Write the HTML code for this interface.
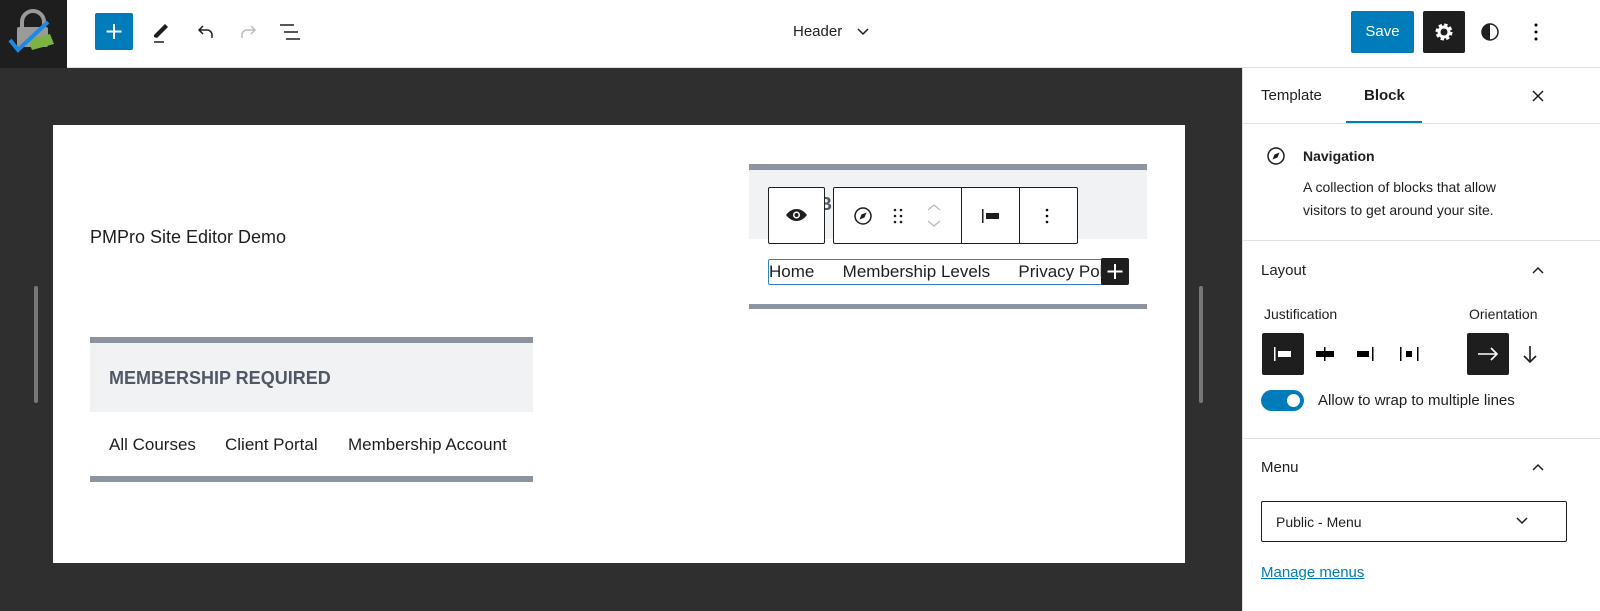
<!DOCTYPE html>
<html><head><meta charset="utf-8">
<style>
*{box-sizing:border-box;margin:0;padding:0}
body{width:1600px;height:611px;overflow:hidden;font-family:"Liberation Sans",sans-serif;color:#1e1e1e;background:#fff;position:relative}
.abs{position:absolute}
.top{left:0;top:0;width:1600px;height:68px;border-bottom:1px solid #ddd;background:#fff}
.logo{left:0;top:0;width:67px;height:68px;background:#1e1e1e}
.canvas{left:0;top:68px;width:1242px;height:543px;background:#2f2f2f}
.frame{left:53px;top:125px;width:1132px;height:438px;background:#fff}
.side{left:1242px;top:68px;width:358px;height:543px;background:#fff;border-left:1px solid #ddd}
.t15{font-size:15px}
.grey{background:#8c959f}
.btn{border:1px solid #1e1e1e;background:#fff}
</style></head><body>
<div class="abs top"></div>
<div class="abs logo">
<svg width="67" height="68" viewBox="0 0 67 68"><path d="M22 30 v-8 a11 11 0 0 1 22 0 v8" fill="none" stroke="#999" stroke-width="4"/><rect x="17" y="27" width="31" height="20" rx="2" fill="#9a9a9a"/><path d="M28 40 l22 -6 l4 10 l-22 6z" fill="#7cb342"/><path d="M10 40 l8 10 l30 -28" fill="none" stroke="#1e88e5" stroke-width="4"/></svg>
</div>
<div class="abs" style="left:95px;top:13px;width:38px;height:37px;background:#007cba;border-radius:2px"><svg width="38" height="37"><path d="M19 11v15M11.5 18.5h15" stroke="#fff" stroke-width="2"/></svg></div>
<svg class="abs" style="left:150px;top:20px" width="24" height="24" viewBox="0 0 24 24"><path d="M4 17l3 1 11-11-3-3L4 15z" fill="#1e1e1e"/><path d="M4 22h10" stroke="#1e1e1e" stroke-width="1.5"/></svg>
<svg class="abs" style="left:194px;top:20px" width="24" height="24" viewBox="0 0 24 24"><path d="M18 18v-3a5 5 0 0 0-5-5H5M9 6 5 10l4 4" fill="none" stroke="#1e1e1e" stroke-width="1.5"/></svg>
<svg class="abs" style="left:236px;top:20px" width="24" height="24" viewBox="0 0 24 24"><path d="M6 18v-3a5 5 0 0 1 5-5h8M15 6l4 4-4 4" fill="none" stroke="#bbb" stroke-width="1.5"/></svg>
<svg class="abs" style="left:278px;top:20px" width="24" height="24" viewBox="0 0 24 24"><path d="M2 5h14M6 12h14M8 19h14" stroke="#1e1e1e" stroke-width="1.5"/></svg>
<div class="abs t15" style="left:793px;top:23px">Header</div>
<svg class="abs" style="left:856px;top:26px" width="14" height="10"><path d="M2 3l5 5 5-5" fill="none" stroke="#1e1e1e" stroke-width="1.5"/></svg>
<div class="abs" style="left:1351px;top:11px;width:63px;height:42px;background:#007cba;border-radius:2px;color:#fff;font-size:15px;line-height:42px;text-align:center">Save</div>
<div class="abs" style="left:1423px;top:11px;width:42px;height:42px;background:#1e1e1e;border-radius:2px"><svg width="42" height="42" viewBox="0 0 42 42"><circle cx="21" cy="21" r="6.5" fill="none" stroke="#fff" stroke-width="4" stroke-dasharray="3 2.1"/><circle cx="21" cy="21" r="5" fill="none" stroke="#fff" stroke-width="3"/></svg></div>
<svg class="abs" style="left:1480px;top:22px" width="20" height="20"><circle cx="10" cy="10" r="8" fill="none" stroke="#1e1e1e" stroke-width="1.5"/><path d="M10 2a8 8 0 0 0 0 16z" fill="#1e1e1e"/></svg>
<svg class="abs" style="left:1530px;top:20px" width="12" height="24"><circle cx="6" cy="5" r="1.5"/><circle cx="6" cy="12" r="1.5"/><circle cx="6" cy="19" r="1.5"/></svg>

<div class="abs canvas"></div>
<div class="abs" style="left:34px;top:286px;width:4px;height:117px;background:#777;border-radius:2px"></div>
<div class="abs" style="left:1199px;top:286px;width:4px;height:117px;background:#777;border-radius:2px"></div>
<div class="abs frame"></div>
<div class="abs" style="left:90px;top:227px;font-size:18px">PMPro Site Editor Demo</div>
<div class="abs grey" style="left:90px;top:337px;width:443px;height:6px"></div>
<div class="abs" style="left:90px;top:343px;width:443px;height:69px;background:#f1f2f3"></div>
<div class="abs" style="left:109px;top:368px;font-size:18px;font-weight:bold;color:#4f5864">MEMBERSHIP REQUIRED</div>
<div class="abs" style="left:109px;top:435px;font-size:17px">All Courses</div>
<div class="abs" style="left:225px;top:435px;font-size:17px">Client Portal</div>
<div class="abs" style="left:348px;top:435px;font-size:17px">Membership Account</div>
<div class="abs grey" style="left:90px;top:476px;width:443px;height:6px"></div>

<div class="abs grey" style="left:749px;top:164px;width:398px;height:6px"></div>
<div class="abs" style="left:749px;top:170px;width:398px;height:69px;background:#f1f2f3"></div>
<div class="abs" style="left:749px;top:304px;width:398px;height:5px;background:#8c959f"></div>
<div class="abs" style="left:819px;top:194px;font-size:18px;font-weight:bold;color:#4f5864">B</div>
<div class="abs btn" style="left:768px;top:187px;width:57px;height:57px;border-radius:2px"><svg width="55" height="55"><path d="M17 27c6-8 15-8 21 0c-6 8-15 8-21 0z" fill="#1e1e1e"/><circle cx="27.5" cy="27" r="3.5" fill="#fff"/><circle cx="27.5" cy="27" r="2" fill="#1e1e1e"/></svg></div>
<div class="abs btn" style="left:833px;top:187px;width:245px;height:57px;border-radius:2px"></div>
<div class="abs" style="left:961px;top:187px;width:1px;height:57px;background:#1e1e1e"></div>
<div class="abs" style="left:1019px;top:187px;width:1px;height:57px;background:#1e1e1e"></div>
<svg class="abs" style="left:851px;top:204px" width="24" height="24"><circle cx="12" cy="12" r="8" fill="none" stroke="#1e1e1e" stroke-width="1.5"/><path d="M15.5 8.5l-5 2-2 5 5-2z" fill="#1e1e1e"/></svg>
<svg class="abs" style="left:890px;top:204px" width="16" height="24"><g fill="#1e1e1e"><circle cx="5" cy="6" r="1.3"/><circle cx="11" cy="6" r="1.3"/><circle cx="5" cy="12" r="1.3"/><circle cx="11" cy="12" r="1.3"/><circle cx="5" cy="18" r="1.3"/><circle cx="11" cy="18" r="1.3"/></g></svg>
<svg class="abs" style="left:922px;top:198px" width="24" height="36"><path d="M6 12l6-5 6 5M6 23l6 5 6-5" fill="none" stroke="#bbb" stroke-width="1.3"/></svg>
<svg class="abs" style="left:979px;top:204px" width="24" height="24"><rect x="3" y="5" width="1.5" height="14" fill="#1e1e1e"/><rect x="7" y="9" width="13" height="6" fill="#1e1e1e"/></svg>
<svg class="abs" style="left:1041px;top:204px" width="12" height="24"><circle cx="6" cy="6" r="1.3"/><circle cx="6" cy="12" r="1.3"/><circle cx="6" cy="18" r="1.3"/></svg>
<div class="abs" style="left:768px;top:259px;width:360px;height:26px;border:1.5px solid #3582c4;border-radius:2px"></div>
<div class="abs" style="left:769px;top:262px;font-size:17px;white-space:nowrap;width:334px;overflow:hidden">Home&nbsp;&nbsp;&nbsp;&nbsp;&nbsp;&nbsp;Membership Levels&nbsp;&nbsp;&nbsp;&nbsp;&nbsp;&nbsp;Privacy Policy</div>
<div class="abs" style="left:1101px;top:258px;width:28px;height:27px;background:#1e1e1e;border-radius:2px"><svg width="28" height="27"><path d="M14 6v15M6.5 13.5h15" stroke="#fff" stroke-width="2"/></svg></div>

<div class="abs side"></div>
<div class="abs t15" style="left:1261px;top:87px">Template</div>
<div class="abs t15" style="left:1364px;top:87px;font-weight:bold;color:#1e1e1e">Block</div>
<div class="abs" style="left:1346px;top:121px;width:76px;height:2px;background:#007cba"></div>
<div class="abs" style="left:1243px;top:123px;width:357px;height:1px;background:#e0e0e0"></div>
<svg class="abs" style="left:1528px;top:86px" width="20" height="20"><path d="M5 5l10 10M15 5L5 15" stroke="#1e1e1e" stroke-width="1.5"/></svg>
<svg class="abs" style="left:1264px;top:144px" width="24" height="24"><circle cx="12" cy="12" r="8" fill="none" stroke="#1e1e1e" stroke-width="1.5"/><path d="M15.5 8.5l-5 2-2 5 5-2z" fill="#1e1e1e"/></svg>
<div class="abs" style="left:1303px;top:148px;font-size:14px;font-weight:bold">Navigation</div>
<div class="abs" style="left:1303px;top:176px;font-size:14px;line-height:23px;width:240px">A collection of blocks that allow visitors to get around your site.</div>
<div class="abs" style="left:1243px;top:240px;width:357px;height:1px;background:#e0e0e0"></div>
<div class="abs t15" style="left:1261px;top:262px">Layout</div>
<svg class="abs" style="left:1530px;top:263px" width="16" height="14"><path d="M3 10l5-5 5 5" fill="none" stroke="#1e1e1e" stroke-width="1.5"/></svg>
<div class="abs" style="left:1264px;top:306px;font-size:14px">Justification</div>
<div class="abs" style="left:1469px;top:306px;font-size:14px">Orientation</div>
<div class="abs" style="left:1262px;top:333px;width:42px;height:42px;background:#1e1e1e;border-radius:2px"><svg width="42" height="42"><rect x="12" y="14" width="1.5" height="14" fill="#fff"/><rect x="16" y="18" width="13" height="6" fill="#fff"/></svg></div>
<svg class="abs" style="left:1313px;top:342px" width="24" height="24"><rect x="11" y="5" width="1.5" height="14"/><rect x="3" y="9" width="18" height="6"/></svg>
<svg class="abs" style="left:1354px;top:342px" width="24" height="24"><rect x="18" y="5" width="1.5" height="14"/><rect x="3" y="9" width="12" height="6"/></svg>
<svg class="abs" style="left:1397px;top:342px" width="24" height="24"><rect x="3" y="5" width="1.5" height="14"/><rect x="20" y="5" width="1.5" height="14"/><rect x="9" y="9" width="6" height="6"/></svg>
<div class="abs" style="left:1467px;top:333px;width:42px;height:42px;background:#1e1e1e;border-radius:2px"><svg width="42" height="42"><path d="M11 21h19M24 15l6 6-6 6" fill="none" stroke="#fff" stroke-width="1.6"/></svg></div>
<svg class="abs" style="left:1518px;top:342px" width="24" height="24"><path d="M12 4v16M6 14l6 6 6-6" fill="none" stroke="#1e1e1e" stroke-width="1.6"/></svg>
<div class="abs" style="left:1261px;top:390px;width:43px;height:21px;background:#007cba;border-radius:11px"><div style="position:absolute;right:4px;top:4px;width:13px;height:13px;background:#fff;border-radius:50%"></div></div>
<div class="abs t15" style="left:1318px;top:392px">Allow to wrap to multiple lines</div>
<div class="abs" style="left:1243px;top:438px;width:357px;height:1px;background:#e0e0e0"></div>
<div class="abs t15" style="left:1261px;top:459px">Menu</div>
<svg class="abs" style="left:1530px;top:460px" width="16" height="14"><path d="M3 10l5-5 5 5" fill="none" stroke="#1e1e1e" stroke-width="1.5"/></svg>
<div class="abs" style="left:1261px;top:501px;width:306px;height:41px;border:1px solid #1e1e1e;border-radius:2px"></div>
<div class="abs" style="left:1276px;top:514px;font-size:14px">Public - Menu</div>
<svg class="abs" style="left:1514px;top:515px" width="16" height="12"><path d="M3 3l5 5 5-5" fill="none" stroke="#1e1e1e" stroke-width="1.5"/></svg>
<div class="abs t15" style="left:1261px;top:564px;color:#007cba;text-decoration:underline">Manage menus</div>
</body></html>
